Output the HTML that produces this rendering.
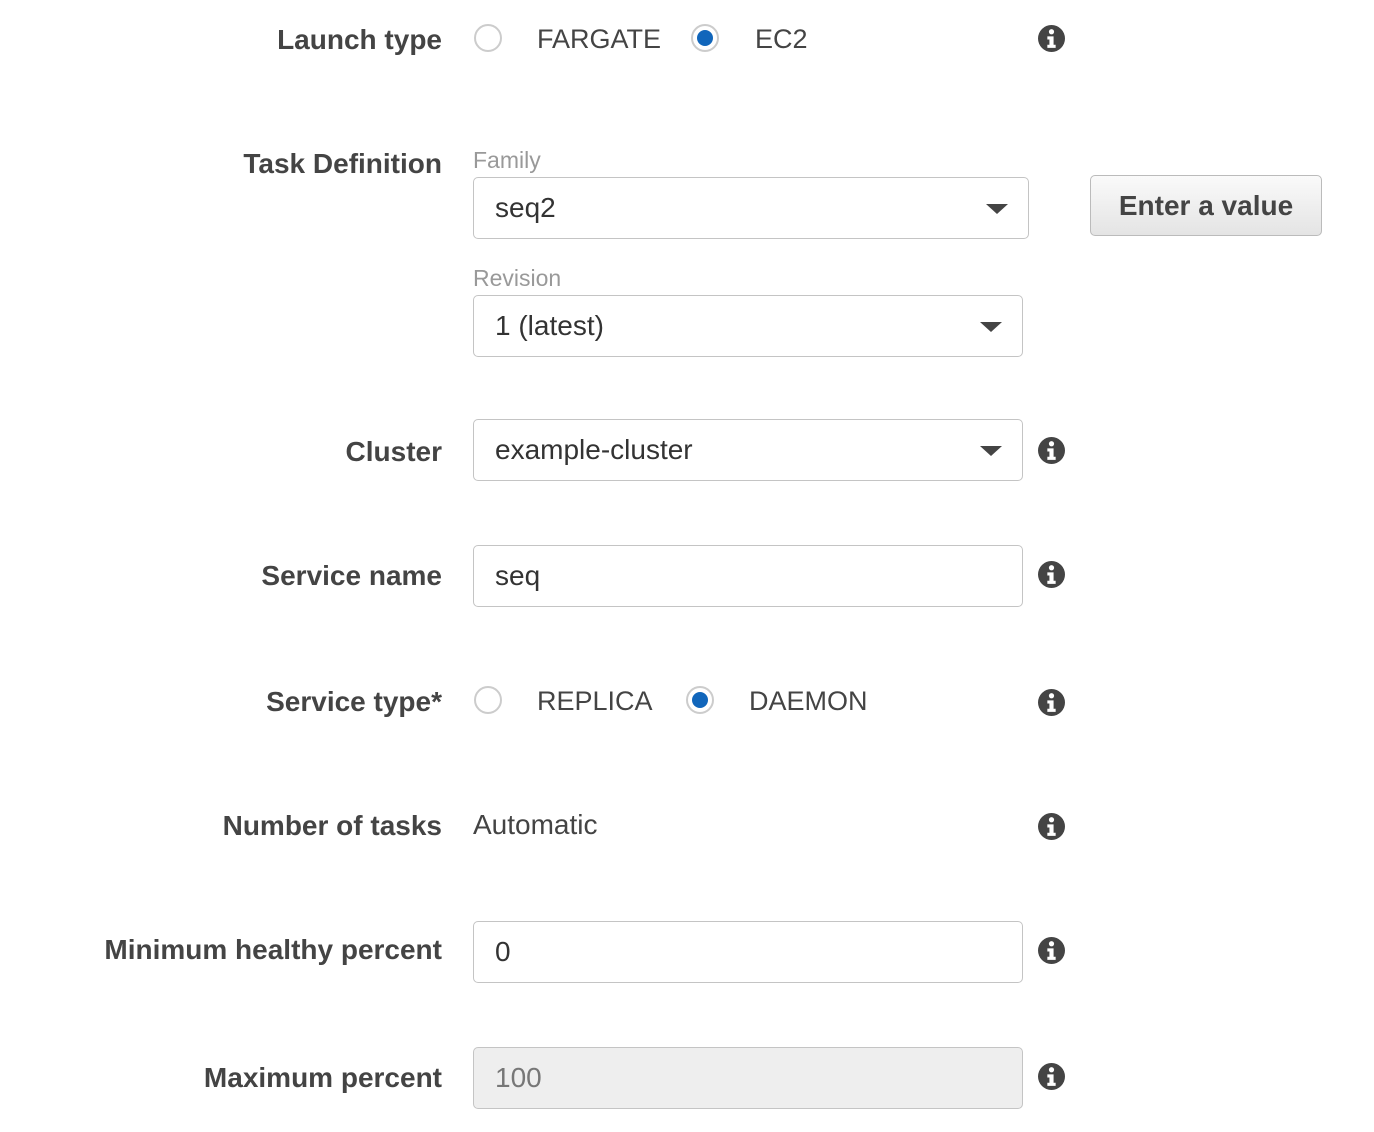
<!DOCTYPE html>
<html><head><style>
body{margin:0;width:1374px;height:1132px;background:#fff;font-family:"Liberation Sans",sans-serif;color:#444;position:relative;overflow:hidden}
.l{position:absolute;right:932px;font-weight:bold;font-size:28px;line-height:30px;white-space:nowrap}
.t{position:absolute;font-size:27px;line-height:30px;white-space:nowrap}
.s{position:absolute;font-size:23px;color:#999;line-height:26px}
.in{position:absolute;left:473px;width:548px;height:60px;border:1px solid #c4c4c4;border-radius:5px;box-sizing:content-box;font-size:28px;line-height:60px;text-indent:21px;color:#333}
.ar{position:absolute;right:20px;top:26px;width:0;height:0;border-left:11px solid transparent;border-right:11px solid transparent;border-top:10px solid #444}
.r{position:absolute;width:28px;height:28px;border:2px solid #ccc;border-radius:50%;box-sizing:border-box}
.r.on::after{content:"";position:absolute;left:4px;top:4px;width:16px;height:16px;border-radius:50%;background:#1166bb}
.i{position:absolute;left:1038px;width:27px;height:27px}
</style></head><body>
<svg width="0" height="0" style="position:absolute"><defs><symbol id="info" viewBox="0 0 26 26"><circle cx="13" cy="13" r="13" fill="#444"/><circle cx="13" cy="6.5" r="2.5" fill="#fff"/><path d="M9 11h6v8h2v3H9v-3h2v-5H9z" fill="#fff"/></symbol></defs></svg>

<div class="l" style="top:25px">Launch type</div>
<div class="r" style="left:474px;top:24px"></div><div class="t" style="left:537px;top:24px">FARGATE</div>
<div class="r on" style="left:691px;top:24px"></div><div class="t" style="left:755px;top:24px">EC2</div>
<svg class="i" style="top:25px"><use href="#info"/></svg>

<div class="l" style="top:149px">Task Definition</div>
<div class="s" style="left:473px;top:147px">Family</div>
<div class="in" style="top:177px;width:554px">seq2<div class="ar"></div></div>
<div style="position:absolute;left:1090px;top:175px;width:230px;height:59px;border:1px solid #bbb;border-radius:5px;background:linear-gradient(#fafafa,#e4e4e4);font-weight:bold;font-size:28px;line-height:59px;text-align:center;color:#444">Enter a value</div>
<div class="s" style="left:473px;top:265px">Revision</div>
<div class="in" style="top:295px">1 (latest)<div class="ar"></div></div>

<div class="l" style="top:437px">Cluster</div>
<div class="in" style="top:419px">example-cluster<div class="ar"></div></div>
<svg class="i" style="top:437px"><use href="#info"/></svg>

<div class="l" style="top:561px">Service name</div>
<div class="in" style="top:545px">seq</div>
<svg class="i" style="top:561px"><use href="#info"/></svg>

<div class="l" style="top:687px">Service type*</div>
<div class="r" style="left:474px;top:686px"></div><div class="t" style="left:537px;top:686px">REPLICA</div>
<div class="r on" style="left:686px;top:686px"></div><div class="t" style="left:749px;top:686px">DAEMON</div>
<svg class="i" style="top:689px"><use href="#info"/></svg>

<div class="l" style="top:811px">Number of tasks</div>
<div class="t" style="left:473px;top:810px;font-size:28px">Automatic</div>
<svg class="i" style="top:813px"><use href="#info"/></svg>

<div class="l" style="top:935px">Minimum healthy percent</div>
<div class="in" style="top:921px">0</div>
<svg class="i" style="top:937px"><use href="#info"/></svg>

<div class="l" style="top:1063px">Maximum percent</div>
<div class="in" style="top:1047px;background:#eee;color:#777">100</div>
<svg class="i" style="top:1063px"><use href="#info"/></svg>
</body></html>
